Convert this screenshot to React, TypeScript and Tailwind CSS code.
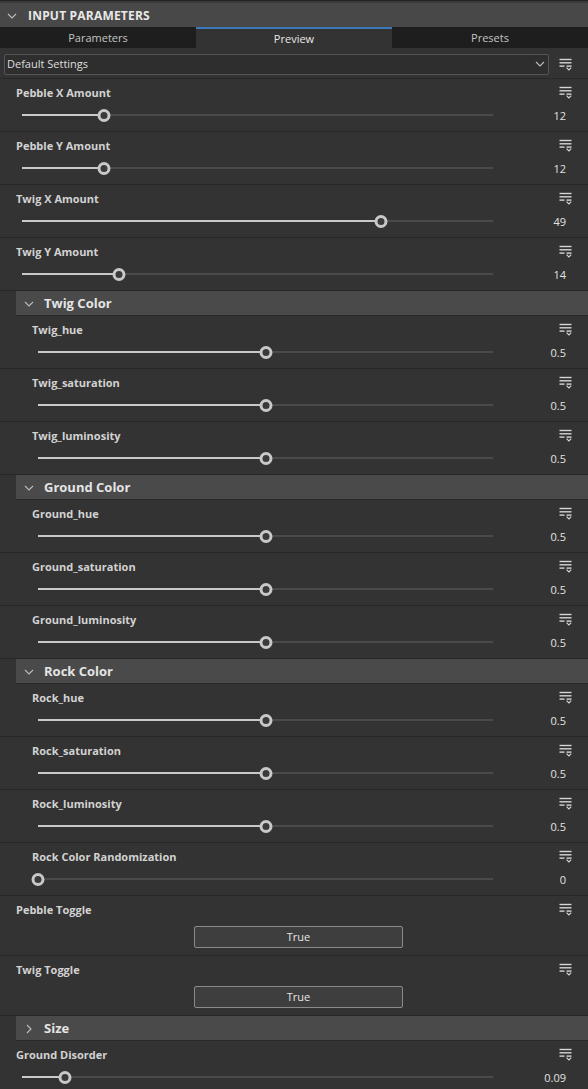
import { ReactNode } from 'react';

type Param =
  | { kind: 'slider'; label: string; value: string; pct: number }
  | { kind: 'toggle'; label: string; value: string };

type Block =
  | { kind: 'param'; param: Param }
  | { kind: 'group'; title: string; open: boolean; items: Param[] };

const amount = (v: number) => (v - 1) / 63;

const blocks: Block[] = [
  { kind: 'param', param: { kind: 'slider', label: 'Pebble X Amount', value: '12', pct: amount(12) } },
  { kind: 'param', param: { kind: 'slider', label: 'Pebble Y Amount', value: '12', pct: amount(12) } },
  { kind: 'param', param: { kind: 'slider', label: 'Twig X Amount', value: '49', pct: amount(49) } },
  { kind: 'param', param: { kind: 'slider', label: 'Twig Y Amount', value: '14', pct: amount(14) } },
  {
    kind: 'group',
    title: 'Twig Color',
    open: true,
    items: [
      { kind: 'slider', label: 'Twig_hue', value: '0.5', pct: 0.5 },
      { kind: 'slider', label: 'Twig_saturation', value: '0.5', pct: 0.5 },
      { kind: 'slider', label: 'Twig_luminosity', value: '0.5', pct: 0.5 },
    ],
  },
  {
    kind: 'group',
    title: 'Ground Color',
    open: true,
    items: [
      { kind: 'slider', label: 'Ground_hue', value: '0.5', pct: 0.5 },
      { kind: 'slider', label: 'Ground_saturation', value: '0.5', pct: 0.5 },
      { kind: 'slider', label: 'Ground_luminosity', value: '0.5', pct: 0.5 },
    ],
  },
  {
    kind: 'group',
    title: 'Rock Color',
    open: true,
    items: [
      { kind: 'slider', label: 'Rock_hue', value: '0.5', pct: 0.5 },
      { kind: 'slider', label: 'Rock_saturation', value: '0.5', pct: 0.5 },
      { kind: 'slider', label: 'Rock_luminosity', value: '0.5', pct: 0.5 },
      { kind: 'slider', label: 'Rock Color Randomization', value: '0', pct: 0 },
    ],
  },
  { kind: 'param', param: { kind: 'toggle', label: 'Pebble Toggle', value: 'True' } },
  { kind: 'param', param: { kind: 'toggle', label: 'Twig Toggle', value: 'True' } },
  { kind: 'group', title: 'Size', open: false, items: [] },
  { kind: 'param', param: { kind: 'slider', label: 'Ground Disorder', value: '0.09', pct: 0.091 } },
];

// preset / options menu glyph: bars with a small drop arrow
function MenuIcon() {
  return (
    <svg width="13" height="13" viewBox="0 0 13 13" className="block">
      <g stroke="#d6d6d6" strokeWidth="1.4" fill="none">
        <line x1="0.5" y1="1.5" x2="12.5" y2="1.5" />
        <line x1="0.5" y1="4.8" x2="12.5" y2="4.8" />
        <line x1="0.5" y1="8.1" x2="5.5" y2="8.1" />
        <line x1="7.5" y1="8.1" x2="12.5" y2="8.1" />
        <polyline points="7.6,9.6 9.9,11.9 12.2,9.6" strokeWidth="1.1" />
      </g>
    </svg>
  );
}

function Chevron({ open }: { open: boolean }) {
  return (
    <svg width="10" height="10" viewBox="0 0 10 10" className="block">
      {open ? (
        <polyline points="1,3 5,7 9,3" stroke="#bdbdbd" strokeWidth="1.1" fill="none" />
      ) : (
        <polyline points="3,1 7,5 3,9" stroke="#bdbdbd" strokeWidth="1.1" fill="none" />
      )}
    </svg>
  );
}

function Slider({ pct }: { pct: number }) {
  return (
    <div className="relative h-[14px] flex-1">
      <div className="absolute left-0 right-0 top-[6px] h-[2px] bg-[#4a4a4a]" />
      <div className="absolute left-0 top-[6px] h-[2px] bg-[#c9c9c9]" style={{ width: `${pct * 100}%` }} />
      <div
        className="absolute top-[0.5px] h-[13px] w-[13px] -translate-x-1/2 rounded-full border-[3px] border-[#c8c8c8] bg-[#3a3a3a]"
        style={{ left: `${pct * 100}%` }}
      />
    </div>
  );
}

function ParamRow({ param, nested }: { param: Param; nested: boolean }) {
  const pad = nested ? 'pl-[32px]' : 'pl-[16px]';
  if (param.kind === 'toggle') {
    return (
      <div className={`h-[60px] border-b border-[#272727] ${pad}`}>
        <div className="flex h-[22px] items-end pr-[16px]">
          <span className="flex-1 text-[11px] font-bold leading-[16px] text-[#d2d2d2]">{param.label}</span>
          <div className="mb-[2px]"><MenuIcon /></div>
        </div>
        <div className="mt-[5px] pl-[178px]">
          <button className="h-[22px] w-[209px] rounded-[2px] border border-[#8a8a8a] bg-[#3e3e3e] text-[11px] text-[#e6e6e6]">
            {param.value}
          </button>
        </div>
      </div>
    );
  }
  return (
    <div className={`h-[53px] border-b border-[#272727] ${pad}`}>
      <div className="flex h-[22px] items-end pr-[16px]">
        <span className="flex-1 text-[11px] font-bold leading-[16px] text-[#d2d2d2]">{param.label}</span>
        <div className="mb-[2px]"><MenuIcon /></div>
      </div>
      <div className="mt-[7px] flex items-start pl-[6px]">
        <Slider pct={param.pct} />
        <span className="mt-[1px] w-[95px] pr-[22px] text-right text-[11px] leading-[14px] text-[#e2e2e2]">{param.value}</span>
      </div>
    </div>
  );
}

function GroupHeader({ title, open }: { title: string; open: boolean }) {
  return (
    <div className="ml-[16px] flex h-[25px] items-center border-b border-[#2a2a2a] bg-[#4a4a4a] pl-[8px] pt-[2px]">
      <Chevron open={open} />
      <span className="ml-[10px] text-[13px] font-bold text-[#e4e4e4]">{title}</span>
    </div>
  );
}

function Tab({ children, active }: { children: ReactNode; active?: boolean }) {
  return (
    <div
      className={`flex h-[21px] flex-1 items-center justify-center pt-[2px] text-[11px] ${
        active ? 'border-t-2 border-[#3a78b8] bg-[#333333] text-[#e8e8e8]' : 'bg-[#1e1e1e] text-[#c4c4c4]'
      }`}
    >
      {children}
    </div>
  );
}

export default function App() {
  return (
    <div className="h-[1089px] w-[588px] overflow-hidden bg-[#333333] font-['Open_Sans','Noto_Sans',sans-serif]">
      <div className="h-[3px] border-t border-[#242424] bg-[#3b3b3b]" />
      <div className="flex h-[24px] items-center bg-[#484848] pl-[7px] pt-[1px]">
        <Chevron open />
        <span className="ml-[11px] text-[12px] font-bold tracking-[0.2px] text-[#e8e8e8]">INPUT PARAMETERS</span>
      </div>
      <div className="flex">
        <Tab>Parameters</Tab>
        <Tab active>Preview</Tab>
        <Tab>Presets</Tab>
      </div>
      <div className="flex h-[31px] items-center border-b border-[#272727] pl-[4px] pr-[16px] pt-[2px]">
        <div className="flex h-[21px] w-[545px] items-center justify-between rounded-[2px] border border-[#545454] bg-[#2e2e2e] pl-[2px] pr-[3px]">
          <span className="text-[11px] text-[#dedede]">Default Settings</span>
          <Chevron open />
        </div>
        <div className="ml-auto"><MenuIcon /></div>
      </div>
      {blocks.map((b, i) =>
        b.kind === 'param' ? (
          <ParamRow key={i} param={b.param} nested={false} />
        ) : (
          <div key={i}>
            <GroupHeader title={b.title} open={b.open} />
            {b.open && b.items.map((p, j) => <ParamRow key={j} param={p} nested />)}
          </div>
        ),
      )}
    </div>
  );
}
